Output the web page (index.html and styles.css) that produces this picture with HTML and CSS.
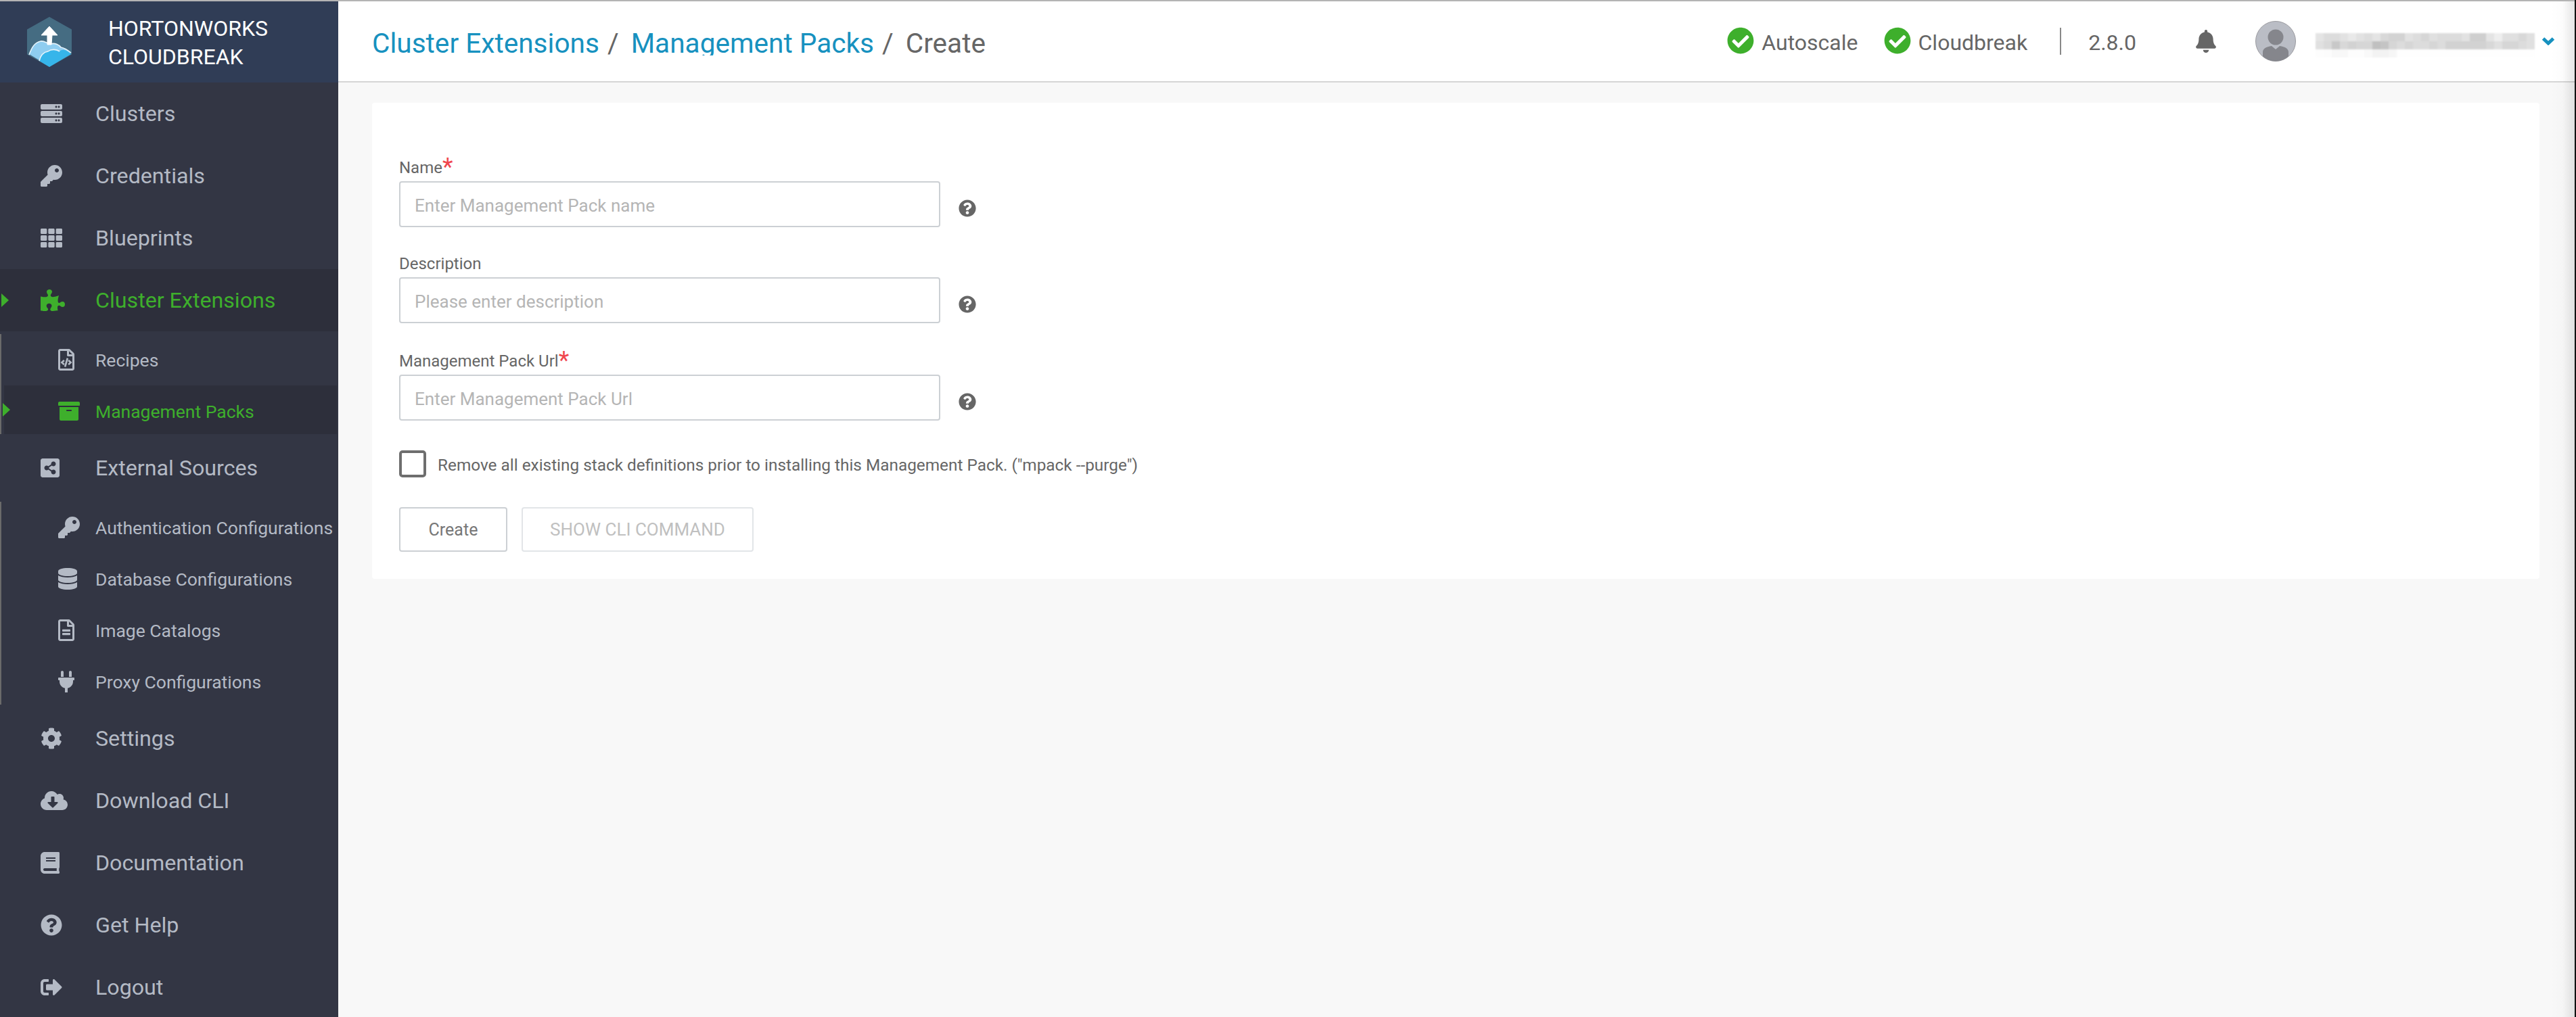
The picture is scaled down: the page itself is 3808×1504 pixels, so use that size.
FILE: index.html
```html
<!DOCTYPE html>
<html lang="en">
<head>
<meta charset="utf-8">
<title>Cloudbreak - Create Management Pack</title>
<link rel="stylesheet" href="styles.css">
</head>
<body>
<svg class="defs" aria-hidden="true">
  <symbol id="i-server" viewBox="0 0 512 512"><path d="M480 160H32c-17.673 0-32-14.327-32-32V64c0-17.673 14.327-32 32-32h448c17.673 0 32 14.327 32 32v64c0 17.673-14.327 32-32 32zm-48-88c-13.255 0-24 10.745-24 24s10.745 24 24 24 24-10.745 24-24-10.745-24-24-24zm-64 0c-13.255 0-24 10.745-24 24s10.745 24 24 24 24-10.745 24-24-10.745-24-24-24zm112 248H32c-17.673 0-32-14.327-32-32v-64c0-17.673 14.327-32 32-32h448c17.673 0 32 14.327 32 32v64c0 17.673-14.327 32-32 32zm-48-88c-13.255 0-24 10.745-24 24s10.745 24 24 24 24-10.745 24-24-10.745-24-24-24zm-64 0c-13.255 0-24 10.745-24 24s10.745 24 24 24 24-10.745 24-24-10.745-24-24-24zm112 248H32c-17.673 0-32-14.327-32-32v-64c0-17.673 14.327-32 32-32h448c17.673 0 32 14.327 32 32v64c0 17.673-14.327 32-32 32zm-48-88c-13.255 0-24 10.745-24 24s10.745 24 24 24 24-10.745 24-24-10.745-24-24-24zm-64 0c-13.255 0-24 10.745-24 24s10.745 24 24 24 24-10.745 24-24-10.745-24-24-24z"/></symbol>
  <symbol id="i-key" viewBox="0 0 512 512"><path d="M512 176.001C512 273.203 433.202 352 336 352c-11.22 0-22.19-1.062-32.827-3.069l-24.012 27.014A23.999 23.999 0 0 1 261.223 384H224v40c0 13.255-10.745 24-24 24h-40v40c0 13.255-10.745 24-24 24H24c-13.255 0-24-10.745-24-24v-78.059c0-6.365 2.529-12.47 7.029-16.971l161.802-161.802C163.108 213.814 160 195.271 160 176 160 78.798 238.797.001 335.999 0 433.488-.001 512 78.511 512 176.001zM336 128c0 26.51 21.49 48 48 48s48-21.49 48-48-21.49-48-48-48-48 21.49-48 48z"/></symbol>
  <symbol id="i-th" viewBox="0 0 512 512"><path d="M149.333 56v80c0 13.255-10.745 24-24 24H24c-13.255 0-24-10.745-24-24V56c0-13.255 10.745-24 24-24h101.333c13.255 0 24 10.745 24 24zm181.334 240v-80c0-13.255-10.745-24-24-24H205.333c-13.255 0-24 10.745-24 24v80c0 13.255 10.745 24 24 24h101.333c13.256 0 24.001-10.745 24.001-24zm32-240v80c0 13.255 10.745 24 24 24H488c13.255 0 24-10.745 24-24V56c0-13.255-10.745-24-24-24H386.667c-13.255 0-24 10.745-24 24zm-32 80V56c0-13.255-10.745-24-24-24H205.333c-13.255 0-24 10.745-24 24v80c0 13.255 10.745 24 24 24h101.333c13.256 0 24.001-10.745 24.001-24zm-205.334 56H24c-13.255 0-24 10.745-24 24v80c0 13.255 10.745 24 24 24h101.333c13.255 0 24-10.745 24-24v-80c0-13.255-10.745-24-24-24zM0 376v80c0 13.255 10.745 24 24 24h101.333c13.255 0 24-10.745 24-24v-80c0-13.255-10.745-24-24-24H24c-13.255 0-24 10.745-24 24zm386.667-56H488c13.255 0 24-10.745 24-24v-80c0-13.255-10.745-24-24-24H386.667c-13.255 0-24 10.745-24 24v80c0 13.255 10.745 24 24 24zm0 160H488c13.255 0 24-10.745 24-24v-80c0-13.255-10.745-24-24-24H386.667c-13.255 0-24 10.745-24 24v80c0 13.255 10.745 24 24 24zM181.333 376v80c0 13.255 10.745 24 24 24h101.333c13.255 0 24-10.745 24-24v-80c0-13.255-10.745-24-24-24H205.333c-13.255 0-24 10.745-24 24z"/></symbol>
  <symbol id="i-puzzle" viewBox="0 0 576 512"><path d="M519.442 288.651c-41.519 0-59.5 31.593-82.058 31.593C377.409 320.244 432 144 432 144s-196.288 80-196.288-3.297c0-35.827 36.288-46.25 36.288-85.985C272 19.216 243.885 0 210.539 0c-34.654 0-66.366 18.891-66.366 56.346 0 41.364 31.711 59.277 31.711 81.75C175.885 207.719 0 166.758 0 166.758v333.237s178.635 41.047 178.635-28.662c0-22.473-40-40.107-40-81.471 0-37.456 29.25-56.346 63.577-56.346 33.673 0 61.788 19.216 61.788 54.717 0 39.735-36.288 50.158-36.288 85.985 0 60.803 129.675 25.73 181.23 25.73 0 0-34.725-120.101 25.827-120.101 35.962 0 46.423 36.152 86.308 36.152C556.712 416 576 387.99 576 354.443c0-34.199-18.962-65.792-56.558-65.792z"/></symbol>
  <symbol id="i-file-code" viewBox="0 0 384 512"><path d="M149.9 349.1l-.2-.2-32.8-28.9 32.8-28.9c3.6-3.2 4-8.8.8-12.4l-.2-.2-17.4-18.6c-3.4-3.6-9-3.7-12.4-.4l-57.7 54.1c-3.7 3.5-3.7 9.4 0 12.8l57.7 54.1c1.6 1.5 3.8 2.4 6 2.4 2.4 0 4.8-1 6.4-2.8l17.4-18.6c3.3-3.5 3.1-9.1-.4-12.4zm220-251.2L286 14C277 5 264.8-.1 252.1-.1H48C21.5 0 0 21.5 0 48v416c0 26.5 21.5 48 48 48h288c26.5 0 48-21.5 48-48V131.9c0-12.7-5.1-25-14.1-34zM256 51.9l76.1 76.1H256zM336 464H48V48h160v104c0 13.3 10.7 24 24 24h104zM209.6 214c-4.7-1.4-9.5 1.3-10.9 6L144 408.1c-1.4 4.7 1.3 9.6 6 10.9l24.4 7.1c4.7 1.4 9.6-1.4 10.9-6L240 231.9c1.4-4.7-1.3-9.6-6-10.9zm24.5 76.9l.2.2 32.8 28.9-32.8 28.9c-3.6 3.2-4 8.8-.8 12.4l.2.2 17.4 18.6c3.3 3.5 8.9 3.7 12.4.4l57.7-54.1c3.7-3.5 3.7-9.4 0-12.8l-57.7-54.1c-3.5-3.3-9.1-3.2-12.4.4l-17.4 18.6c-3.3 3.5-3.1 9.1.4 12.4z"/></symbol>
  <symbol id="i-archive" viewBox="0 0 512 512"><path d="M32 448c0 17.7 14.3 32 32 32h384c17.7 0 32-14.3 32-32V160H32v288zm160-212c0-6.6 5.4-12 12-12h104c6.6 0 12 5.4 12 12v8c0 6.6-5.4 12-12 12H204c-6.6 0-12-5.4-12-12v-8zM480 32H32C14.3 32 0 46.3 0 64v48c0 8.8 7.2 16 16 16h480c8.8 0 16-7.2 16-16V64c0-17.7-14.3-32-32-32z"/></symbol>
  <symbol id="i-share" viewBox="0 0 448 512"><path d="M448 80v352c0 26.51-21.49 48-48 48H48c-26.51 0-48-21.49-48-48V80c0-26.51 21.49-48 48-48h352c26.51 0 48 21.49 48 48zM304 296c-14.562 0-27.823 5.561-37.783 14.671l-67.958-40.775a56.339 56.339 0 0 0 0-27.793l67.958-40.775C276.177 210.439 289.438 216 304 216c30.928 0 56-25.072 56-56s-25.072-56-56-56-56 25.072-56 56c0 4.797.605 9.453 1.74 13.897l-67.958 40.775C171.823 205.561 158.562 200 144 200c-30.928 0-56 25.072-56 56s25.072 56 56 56c14.562 0 27.823-5.561 37.783-14.671l67.958 40.775a56.088 56.088 0 0 0-1.74 13.897c0 30.928 25.072 56 56 56s56-25.072 56-56C360 321.072 334.928 296 304 296z"/></symbol>
  <symbol id="i-database" viewBox="0 0 448 512"><path d="M448 73.143v45.714C448 159.143 347.667 192 224 192S0 159.143 0 118.857V73.143C0 32.857 100.333 0 224 0s224 32.857 224 73.143zM448 176v102.857C448 319.143 347.667 352 224 352S0 319.143 0 278.857V176c48.125 33.143 136.208 48.572 224 48.572S399.874 209.143 448 176zm0 160v102.857C448 479.143 347.667 512 224 512S0 479.143 0 438.857V336c48.125 33.143 136.208 48.572 224 48.572S399.874 369.143 448 336z"/></symbol>
  <symbol id="i-file-alt" viewBox="0 0 384 512"><path d="M288 248v28c0 6.6-5.4 12-12 12H108c-6.6 0-12-5.4-12-12v-28c0-6.6 5.4-12 12-12h168c6.6 0 12 5.4 12 12zm-12 72H108c-6.6 0-12 5.4-12 12v28c0 6.6 5.4 12 12 12h168c6.6 0 12-5.4 12-12v-28c0-6.6-5.4-12-12-12zm108-188.1V464c0 26.5-21.5 48-48 48H48c-26.5 0-48-21.5-48-48V48C0 21.5 21.5 0 48 0h204.1C264.8 0 277 5.1 286 14.1L369.9 98c9 8.9 14.1 21.2 14.1 33.9zm-128-80V128h76.1L256 51.9zM336 464V176H232c-13.3 0-24-10.7-24-24V48H48v416h288z"/></symbol>
  <symbol id="i-plug" viewBox="0 0 384 512"><path d="M256 144V32c0-17.673 14.327-32 32-32s32 14.327 32 32v112h-64zm112 16H16c-8.837 0-16 7.163-16 16v32c0 8.837 7.163 16 16 16h16v32c0 77.406 54.969 141.971 128 156.796V512h64v-99.204c73.031-14.825 128-79.39 128-156.796v-32h16c8.837 0 16-7.163 16-16v-32c0-8.837-7.163-16-16-16zm-240-16V32c0-17.673-14.327-32-32-32S64 14.327 64 32v112h64z"/></symbol>
  <symbol id="i-cog" viewBox="0 0 512 512"><path d="M487.4 315.7l-42.6-24.6c4.3-23.2 4.3-47 0-70.2l42.6-24.6c4.9-2.8 7.1-8.6 5.5-14-11.1-35.6-30-67.8-54.7-94.6-3.8-4.1-10-5.1-14.8-2.3L380.8 110c-17.9-15.4-38.5-27.3-60.8-35.1V25.8c0-5.6-3.9-10.5-9.4-11.7-36.7-8.2-74.3-7.8-109.2 0-5.5 1.2-9.4 6.1-9.4 11.7V75c-22.2 7.9-42.8 19.8-60.8 35.1L88.7 85.5c-4.9-2.8-11-1.9-14.8 2.3-24.7 26.7-43.6 58.9-54.7 94.6-1.7 5.4.6 11.2 5.5 14L67.3 221c-4.3 23.2-4.3 47 0 70.2l-42.6 24.6c-4.9 2.8-7.1 8.6-5.5 14 11.1 35.6 30 67.8 54.7 94.6 3.8 4.1 10 5.1 14.8 2.3l42.6-24.6c17.9 15.4 38.5 27.3 60.8 35.1v49.2c0 5.6 3.9 10.5 9.4 11.7 36.7 8.2 74.3 7.8 109.2 0 5.5-1.2 9.4-6.1 9.4-11.7v-49.2c22.2-7.9 42.8-19.8 60.8-35.1l42.6 24.6c4.9 2.8 11 1.9 14.8-2.3 24.7-26.7 43.6-58.9 54.7-94.6 1.5-5.5-.7-11.3-5.6-14.1zM256 336c-44.1 0-80-35.9-80-80s35.9-80 80-80 80 35.9 80 80-35.9 80-80 80z"/></symbol>
  <symbol id="i-cloud" viewBox="0 0 640 512"><path d="M537.6 226.6c4.1-10.7 6.4-22.4 6.4-34.6 0-53-43-96-96-96-19.7 0-38.1 6-53.3 16.2C367 64.2 315.3 32 256 32c-88.4 0-160 71.6-160 160 0 2.7.1 5.4.2 8.1C40.2 219.8 0 273.2 0 336c0 79.5 64.5 144 144 144h368c70.7 0 128-57.3 128-128 0-61.9-44-113.6-102.4-125.4zm-132.9 88.7L299.3 420.7c-6.2 6.2-16.4 6.2-22.6 0L171.3 315.3c-10.1-10.1-2.9-27.3 11.3-27.3H248V176c0-8.8 7.2-16 16-16h48c8.8 0 16 7.2 16 16v112h65.4c14.2 0 21.4 17.2 11.3 27.3z"/></symbol>
  <symbol id="i-book" viewBox="0 0 448 512"><path d="M448 360V24c0-13.3-10.7-24-24-24H96C43 0 0 43 0 96v320c0 53 43 96 96 96h328c13.3 0 24-10.7 24-24v-16c0-7.5-3.5-14.3-8.9-18.7-4.2-15.4-4.2-59.3 0-74.7 5.4-4.3 8.9-11.1 8.9-18.6zM128 134c0-3.3 2.7-6 6-6h212c3.3 0 6 2.7 6 6v20c0 3.3-2.7 6-6 6H134c-3.3 0-6-2.7-6-6v-20zm0 64c0-3.3 2.7-6 6-6h212c3.3 0 6 2.7 6 6v20c0 3.3-2.7 6-6 6H134c-3.3 0-6-2.7-6-6v-20zm253.4 250H96c-17.7 0-32-14.3-32-32 0-17.6 14.4-32 32-32h285.4c-1.9 17.1-1.9 46.9 0 64z"/></symbol>
  <symbol id="i-help" viewBox="0 0 512 512"><path d="M504 256c0 136.997-111.043 248-248 248S8 392.997 8 256C8 119.083 119.043 8 256 8s248 111.083 248 248zM262.655 90c-54.497 0-89.255 22.957-116.549 63.758-3.536 5.286-2.353 12.415 2.715 16.258l34.699 26.31c5.205 3.947 12.621 3.008 16.665-2.122 17.864-22.658 30.113-35.797 57.303-35.797 20.429 0 45.698 13.148 45.698 32.958 0 14.976-12.363 22.667-32.534 33.976C247.128 238.528 216 254.941 216 296v4c0 6.627 5.373 12 12 12h56c6.627 0 12-5.373 12-12v-1.333c0-28.462 83.186-29.647 83.186-106.667 0-58.002-60.165-102-116.531-102zM256 338c-25.365 0-46 20.635-46 46 0 25.364 20.635 46 46 46s46-20.636 46-46c0-25.365-20.635-46-46-46z"/></symbol>
  <symbol id="i-logout" viewBox="0 0 512 512"><path d="M497 273L329 441c-15 15-41 4.5-41-17v-96H152c-13.3 0-24-10.7-24-24v-96c0-13.3 10.7-24 24-24h136V88c0-21.4 25.9-32 41-17l168 168c9.3 9.4 9.3 24.6 0 34zM192 436v-40c0-6.6-5.4-12-12-12H96c-17.7 0-32-14.3-32-32V160c0-17.7 14.3-32 32-32h84c6.6 0 12-5.4 12-12V76c0-6.6-5.4-12-12-12H96c-53 0-96 43-96 96v192c0 53 43 96 96 96h84c6.6 0 12-5.4 12-12z"/></symbol>
  <symbol id="i-check" viewBox="0 0 512 512"><path d="M504 256c0 136.967-111.033 248-248 248S8 392.967 8 256 119.033 8 256 8s248 111.033 248 248zM227.314 387.314l184-184c6.248-6.248 6.248-16.379 0-22.627l-22.627-22.627c-6.248-6.249-16.379-6.249-22.628 0L216 308.118l-70.059-70.059c-6.248-6.248-16.379-6.248-22.628 0l-22.627 22.627c-6.248 6.248-6.248 16.379 0 22.627l104 104c6.249 6.25 16.379 6.25 22.628.001z"/></symbol>
  <symbol id="i-bell" viewBox="0 0 448 512"><path d="M224 512c35.32 0 63.97-28.65 63.97-64H160.03c0 35.35 28.65 64 63.97 64zm215.39-149.71c-19.32-20.76-55.47-51.99-55.47-154.29 0-77.7-54.48-139.9-127.94-155.16V32c0-17.67-14.32-32-31.98-32s-31.98 14.33-31.98 32v20.84C118.56 68.1 64.08 130.3 64.08 208c0 102.3-36.15 133.53-55.47 154.29-6 6.45-8.66 14.16-8.61 21.71.11 16.4 12.98 32 32.1 32h383.8c19.12 0 32-15.6 32.1-32 .05-7.55-2.61-15.27-8.61-21.71z"/></symbol>
</svg>

<div class="app">
  <aside class="sidebar">
    <div class="brand">
      <svg class="logo" viewBox="0 0 66 74">
        <polygon class="logo-hex" points="33,1 65,19 65,55 33,73 1,55 1,19"/>
        <path class="logo-light" d="M3 55 C7 45 11 38 20 36 C26 35 30 40 35 40 C41 38 47 41 50 45 C56 46 60 49 65 53 L33 73 Z"/>
        <path class="logo-blue" d="M18 65 C20 57 24 52 31 51 C36 47 44 48 48 51 C53 46 60 50 65 55 L33 74 Z"/>
        <path class="logo-line" d="M3 56 C7 45 11 38 20 36 C26 35 30 40 35 40 C41 38 47 41 50 45 C56 46 60 49 65 53"/>
        <path class="logo-line" d="M18 65 C20 57 24 52 31 51 C36 47 44 48 48 51"/>
        <path class="logo-arrow" d="M33 14 L45 27 L37 27 L36 41 L30 41 L30 27 L21 27 Z"/>
      </svg>
      <div class="brand-name">HORTONWORKS<br>CLOUDBREAK</div>
    </div>
    <nav class="nav">
      <a class="item"><svg class="ic"><use href="#i-server"/></svg><span>Clusters</span></a>
      <a class="item"><svg class="ic"><use href="#i-key"/></svg><span>Credentials</span></a>
      <a class="item"><svg class="ic"><use href="#i-th"/></svg><span>Blueprints</span></a>
      <a class="item active"><i class="caret"></i><svg class="ic ic-wide"><use href="#i-puzzle"/></svg><span>Cluster Extensions</span></a>
      <div class="sub">
        <a class="sub-item"><svg class="ic ic-file"><use href="#i-file-code"/></svg><span>Recipes</span></a>
        <a class="sub-item last active"><i class="caret"></i><svg class="ic"><use href="#i-archive"/></svg><span>Management Packs</span></a>
      </div>
      <a class="item"><svg class="ic ic-sq"><use href="#i-share"/></svg><span>External Sources</span></a>
      <div class="sub">
        <a class="sub-item"><svg class="ic"><use href="#i-key"/></svg><span>Authentication Configurations</span></a>
        <a class="sub-item"><svg class="ic ic-sq"><use href="#i-database"/></svg><span>Database Configurations</span></a>
        <a class="sub-item"><svg class="ic ic-file"><use href="#i-file-alt"/></svg><span>Image Catalogs</span></a>
        <a class="sub-item last"><svg class="ic ic-file"><use href="#i-plug"/></svg><span>Proxy Configurations</span></a>
      </div>
      <a class="item"><svg class="ic"><use href="#i-cog"/></svg><span>Settings</span></a>
      <a class="item"><svg class="ic ic-cloud"><use href="#i-cloud"/></svg><span>Download CLI</span></a>
      <a class="item"><svg class="ic ic-sq"><use href="#i-book"/></svg><span>Documentation</span></a>
      <a class="item"><svg class="ic"><use href="#i-help"/></svg><span>Get Help</span></a>
      <a class="item"><svg class="ic"><use href="#i-logout"/></svg><span>Logout</span></a>
    </nav>
  </aside>

  <div class="content">
    <header class="topbar">
      <div class="crumbs">
        <a class="crumb-link">Cluster Extensions</a><span class="crumb-sep">/</span>
        <a class="crumb-link">Management Packs</a><span class="crumb-sep">/</span>
        <span class="crumb-current">Create</span>
      </div>
      <div class="status">
        <span class="state"><svg class="state-ic"><use href="#i-check"/></svg><span class="state-text">Autoscale</span></span>
        <span class="state"><svg class="state-ic"><use href="#i-check"/></svg><span class="state-text">Cloudbreak</span></span>
        <span class="divider"></span>
        <span class="state-text version">2.8.0</span>
        <svg class="bell"><use href="#i-bell"/></svg>
        <svg class="avatar" viewBox="0 0 60 60">
          <defs><clipPath id="avatar-clip"><circle cx="30" cy="30" r="29.5"/></clipPath></defs>
          <circle class="avatar-bg" cx="30" cy="30" r="29.5"/>
          <g clip-path="url(#avatar-clip)">
            <circle class="avatar-fg" cx="30" cy="24" r="11.5"/>
            <path class="avatar-fg" d="M11 60 L11 46 C11 41 16 38 24 37 L30 42 L36 37 C44 38 49 41 49 46 L49 60 Z"/>
          </g>
        </svg>
        <svg class="masked" viewBox="0 0 27 3" preserveAspectRatio="none" shape-rendering="crispEdges" aria-hidden="true">
          <g>
            <rect x="0" y="0" width="1" height="1" fill="#e4e4e4"/><rect x="1" y="0" width="1" height="1" fill="#dcdcdc"/><rect x="2" y="0" width="1" height="1" fill="#dcdcdc"/><rect x="3" y="0" width="1" height="1" fill="#e2e2e2"/><rect x="4" y="0" width="1" height="1" fill="#e9e9e9"/><rect x="5" y="0" width="1" height="1" fill="#e2e2e2"/><rect x="6" y="0" width="1" height="1" fill="#dddddd"/><rect x="7" y="0" width="1" height="1" fill="#e4e4e4"/><rect x="8" y="0" width="1" height="1" fill="#d8d8d8"/><rect x="9" y="0" width="2" height="1" fill="#d3d3d3"/><rect x="11" y="0" width="1" height="1" fill="#e2e2e2"/><rect x="12" y="0" width="1" height="1" fill="#dddddd"/><rect x="13" y="0" width="1" height="1" fill="#d6d6d6"/><rect x="14" y="0" width="1" height="1" fill="#e0e0e0"/><rect x="15" y="0" width="3" height="1" fill="#dcdcdc"/><rect x="18" y="0" width="1" height="1" fill="#e2e2e2"/><rect x="19" y="0" width="2" height="1" fill="#cfcfcf"/><rect x="21" y="0" width="1" height="1" fill="#e4e4e4"/><rect x="22" y="0" width="1" height="1" fill="#eeeeee"/><rect x="23" y="0" width="2" height="1" fill="#e0e0e0"/><rect x="25" y="0" width="1" height="1" fill="#d8d8d8"/><rect x="26" y="0" width="1" height="1" fill="#e0e0e0"/>
            <rect x="0" y="1" width="1" height="1" fill="#e0e0e0"/><rect x="1" y="1" width="1" height="1" fill="#d9d9d9"/><rect x="2" y="1" width="1" height="1" fill="#c8c8c8"/><rect x="3" y="1" width="1" height="1" fill="#d8d8d8"/><rect x="4" y="1" width="1" height="1" fill="#d2d2d2"/><rect x="5" y="1" width="2" height="1" fill="#d6d6d6"/><rect x="7" y="1" width="1" height="1" fill="#c0c0c0"/><rect x="8" y="1" width="1" height="1" fill="#c4c4c4"/><rect x="9" y="1" width="1" height="1" fill="#d6d6d6"/><rect x="10" y="1" width="1" height="1" fill="#dcdcdc"/><rect x="11" y="1" width="1" height="1" fill="#d6d6d6"/><rect x="12" y="1" width="2" height="1" fill="#dcdcdc"/><rect x="14" y="1" width="1" height="1" fill="#d6d6d6"/><rect x="15" y="1" width="1" height="1" fill="#dcdcdc"/><rect x="16" y="1" width="5" height="1" fill="#d2d2d2"/><rect x="21" y="1" width="1" height="1" fill="#d8d8d8"/><rect x="22" y="1" width="1" height="1" fill="#e0e0e0"/><rect x="23" y="1" width="2" height="1" fill="#d6d6d6"/><rect x="25" y="1" width="1" height="1" fill="#dcdcdc"/><rect x="26" y="1" width="1" height="1" fill="#e0e0e0"/>
            <rect x="0" y="2" width="1" height="1" fill="#fdfdfd"/><rect x="1" y="2" width="1" height="1" fill="#fcfcfc"/><rect x="2" y="2" width="2" height="1" fill="#f8f8f8"/><rect x="4" y="2" width="2" height="1" fill="#fdfdfd"/><rect x="6" y="2" width="1" height="1" fill="#f9f9f9"/><rect x="7" y="2" width="2" height="1" fill="#f3f3f3"/><rect x="9" y="2" width="1" height="1" fill="#f6f6f6"/><rect x="10" y="2" width="17" height="1" fill="#fefefe"/>
          </g>
        </svg>
        <svg class="chevron" viewBox="0 0 20 13"><path d="M2.5 3 L10 10 L17.5 3"/></svg>
      </div>
    </header>

    <main class="page">
      <form class="card">
        <div class="field">
          <label class="label">Name<span class="req">*</span></label>
          <div class="control">
            <input class="input" type="text" placeholder="Enter Management Pack name">
            <svg class="help"><use href="#i-help"/></svg>
          </div>
        </div>
        <div class="field">
          <label class="label">Description</label>
          <div class="control">
            <input class="input" type="text" placeholder="Please enter description">
            <svg class="help"><use href="#i-help"/></svg>
          </div>
        </div>
        <div class="field field-last">
          <label class="label">Management Pack Url<span class="req">*</span></label>
          <div class="control">
            <input class="input" type="text" placeholder="Enter Management Pack Url">
            <svg class="help"><use href="#i-help"/></svg>
          </div>
        </div>
        <div class="check-row">
          <span class="checkbox"></span>
          <span class="check-text">Remove all existing stack definitions prior to installing this Management Pack. ("mpack --purge")</span>
        </div>
        <div class="actions">
          <button class="btn" type="button">Create</button>
          <button class="btn btn-disabled" type="button">SHOW CLI COMMAND</button>
        </div>
      </form>
    </main>
  </div>
  <div class="edge-shadow"></div>
</div>
</body>
</html>
```
FILE: styles.css
```css
* { box-sizing: border-box; }
html, body { margin: 0; padding: 0; height: 100%; background: #111; overflow: hidden; }
body { font-family: Roboto, "Liberation Sans", sans-serif; }
.defs { position: absolute; width: 0; height: 0; }

.app {
  position: relative;
  display: flex;
  width: 3806px;
  height: 1504px;
  border-top: 2px solid #b4b4b4;
  background: #f8f8f8;
  overflow: hidden;
}

/* Sidebar */
.sidebar { flex: 0 0 500px; background: #333644; color: #b4bac5; }
.brand { display: flex; align-items: center; height: 120px; padding-left: 40px; background: #303d56; }
.logo { width: 66px; height: 74px; flex: none; }
.logo-hex { fill: #456c82; stroke: #456c82; stroke-width: 2; stroke-linejoin: round; }
.logo-light { fill: #8fcdf0; }
.logo-blue { fill: #36b5ea; }
.logo-line { fill: none; stroke: #e6f4fb; stroke-width: 1.6; }
.logo-arrow { fill: #fff; stroke: #fff; stroke-width: 1; stroke-linejoin: round; }
.brand-name { margin-left: 54px; padding-top: 2px; font-size: 32px; line-height: 42px; color: #fff; }

.nav { display: flex; flex-direction: column; }
.item, .sub-item { position: relative; display: flex; align-items: center; }
.item { height: 92px; padding-left: 60px; font-size: 32.2px; }
.item .ic { margin-right: 49px; }
.item .ic-wide { margin-right: 45px; }
.item .ic-sq { margin-right: 53px; }
.item .ic-cloud { margin-right: 41px; }
.ic { width: 32px; height: 32px; flex: none; fill: currentColor; }
.ic-wide { width: 36px; }
.ic-sq { width: 28px; }
.ic-cloud { width: 40px; }
.ic-file { width: 24px; }

.sub { margin: 4px 0; border-left: 2px solid #6a6a6a; padding: 0 2px 0 4px; }
.sub-item { height: 76px; padding-left: 80px; font-size: 26.5px; }
.sub-item .ic { margin-right: 23px; }
.sub-item .ic-sq { margin-right: 27px; }
.sub-item .ic-file { margin-right: 31px; }
.sub-item.last { height: 72px; padding-top: 4px; }

.active { background: #2d2f3b; color: #3eaf2c; }
.caret {
  position: absolute;
  top: 50%;
  margin-top: -10px;
  width: 0;
  height: 0;
  border-style: solid;
  border-width: 10px 0 10px 11px;
  border-color: transparent transparent transparent #3eaf2c;
}
.item .caret { left: 2px; }
.sub-item .caret { left: -2px; }

/* Top bar */
.content { flex: 1; display: flex; flex-direction: column; min-width: 0; }
.topbar {
  flex: 0 0 120px;
  display: flex;
  align-items: center;
  justify-content: space-between;
  padding: 0 30px 0 50px;
  background: #fff;
  border-bottom: 2px solid #d6d6d6;
}
.crumbs {
  display: flex;
  align-items: baseline;
  align-self: flex-start;
  height: 44px;
  margin-top: 36px;
  padding-top: 4px;
  overflow: hidden;
  font-size: 40.6px;
  line-height: 44px;
  color: #666;
}
.crumb-link { color: #1791bf; }
.crumb-sep { margin: 0 18px 0 12px; }
.status { display: flex; align-items: center; font-size: 32px; color: #666; }
.state { display: flex; align-items: center; margin-right: 38px; }
.state-ic { width: 40px; height: 40px; margin: -2px 11px 0 0; fill: #3eaf2c; }
.state-text { padding-top: 3px; }
.divider { width: 2px; height: 40px; background: #888; margin: 0 40px 0 10px; }
.bell { width: 30px; height: 34px; margin: 0 58px 0 88px; fill: #666; }
.avatar { width: 60px; height: 60px; margin-right: 29px; flex: none; }
.avatar-bg { fill: #babdc5; stroke: #9a9a9f; stroke-width: 1; }
.avatar-fg { fill: #85868c; }
.masked { width: 324px; height: 36px; margin-top: 12px; flex: none; filter: blur(0.8px); }
.chevron { width: 20px; height: 13px; margin: -2px -1px 0 10px; fill: none; stroke: #1791bf; stroke-width: 5; }

/* Page */
.page { flex: 1; padding: 30px 52px 0 50px; }
.card { height: 704px; padding: 80px 40px 0; background: #fff; border-radius: 4px; }
.field { margin-bottom: 38px; }
.field-last { margin-top: 40px; margin-bottom: 44px; }
.label { display: block; height: 32px; margin-bottom: 4px; font-size: 24px; line-height: 32px; color: #666; }
.field-last .label { height: 34px; margin-bottom: 2px; }
.req { color: #f0474f; font-size: 36px; line-height: 0; vertical-align: -3px; }
.control { display: flex; align-items: center; }
.input {
  width: 800px;
  height: 68px;
  padding: 3px 21px 0;
  border: 2px solid #ccd0d4;
  border-radius: 4px;
  background: #fff;
  font-family: inherit;
  font-size: 26px;
  color: #666;
  outline: none;
}
.input::placeholder { color: #b5b5b5; opacity: 1; }
.help { width: 26px; height: 26px; margin: 12px 0 0 27px; fill: #666; }
.check-row { display: flex; align-items: center; height: 40px; margin-bottom: 44px; }
.checkbox { flex: none; width: 40px; height: 40px; border: 4px solid #6e6e6e; border-radius: 5px; margin-right: 17px; }
.check-text { padding-top: 2px; font-size: 24.35px; color: #666; }
.actions { display: flex; gap: 21px; }
.btn {
  width: 160px;
  height: 66px;
  padding: 0;
  border: 2px solid #ccd0d4;
  border-radius: 4px;
  background: #fff;
  font-family: inherit;
  font-size: 25px;
  color: #777;
}
.btn-disabled { width: 343px; border-color: #e2e5e8; font-size: 26px; color: #c0c0c0; }

.edge-shadow {
  position: absolute;
  top: 0;
  right: 0;
  width: 36px;
  height: 100%;
  background: linear-gradient(to right, rgba(0,0,0,0), rgba(0,0,0,0.01) 50%, rgba(0,0,0,0.1));
  pointer-events: none;
}
```
